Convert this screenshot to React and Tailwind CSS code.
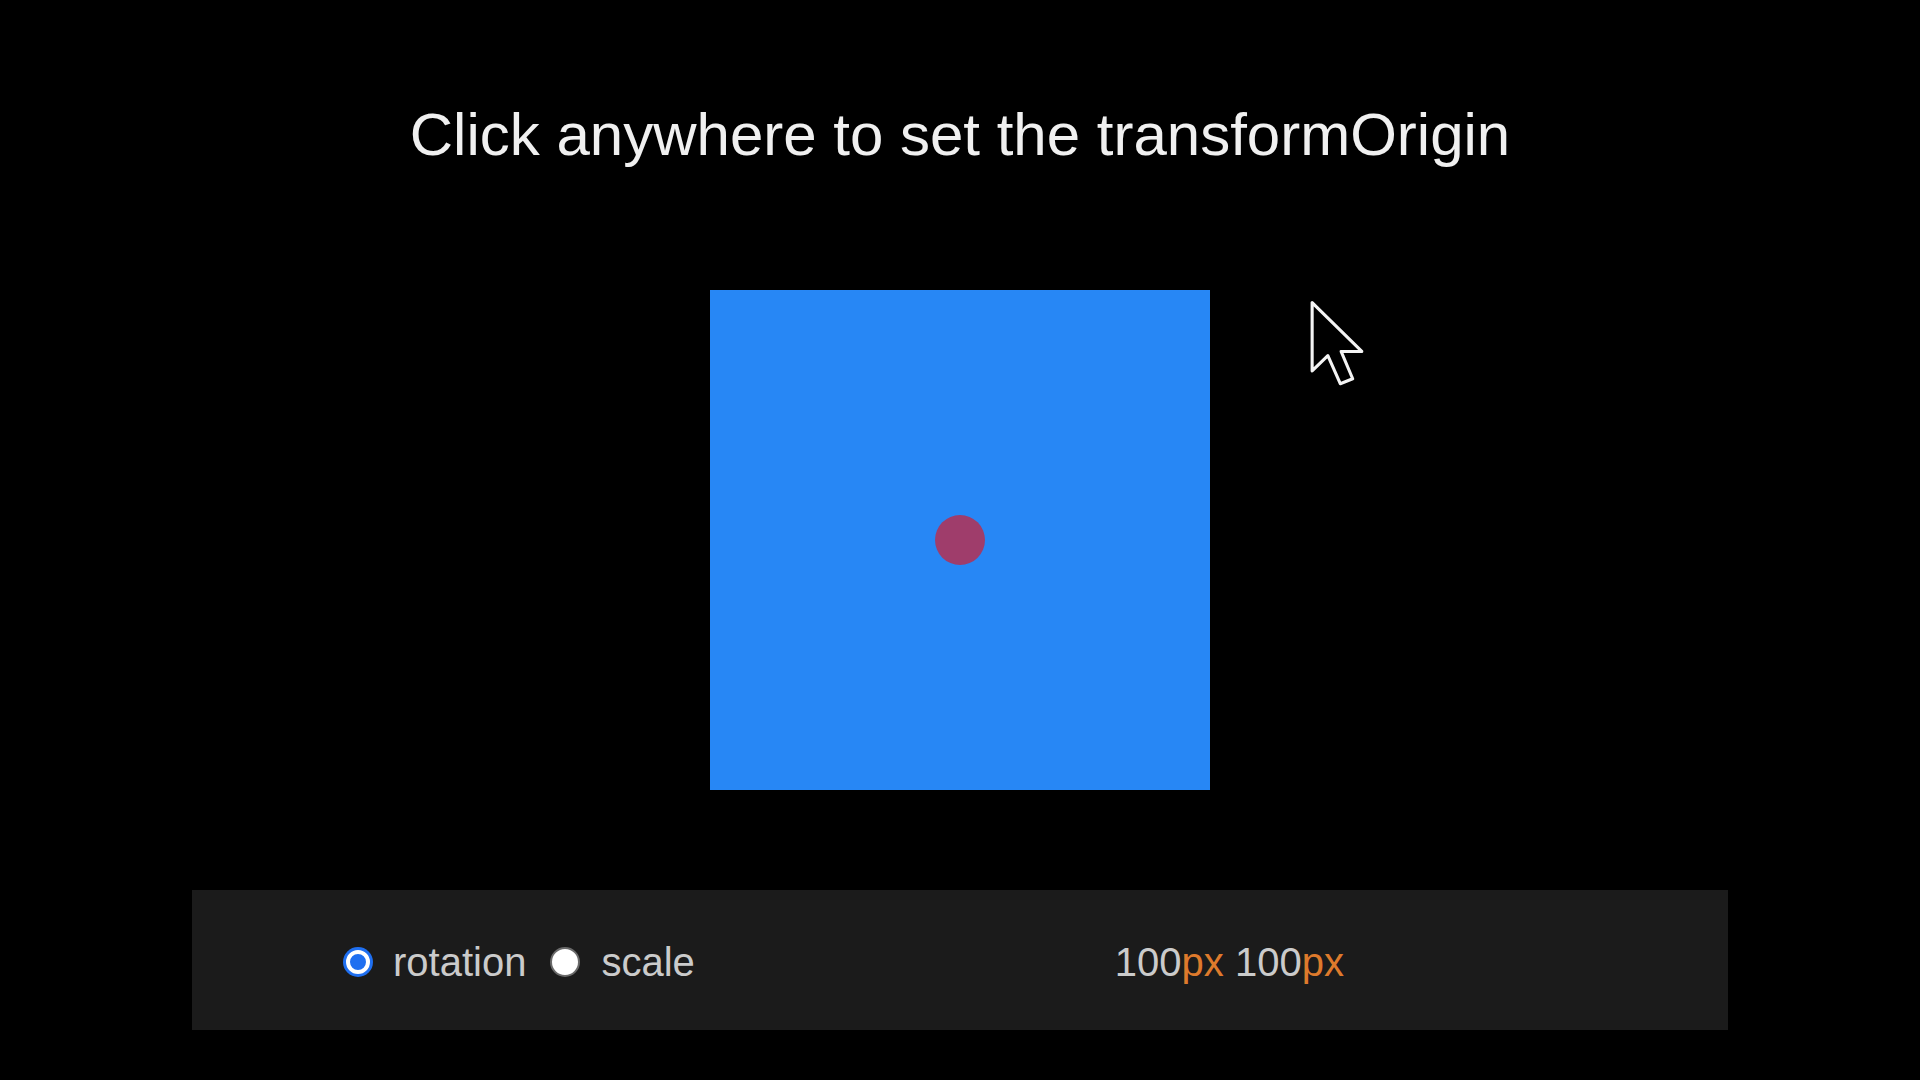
import React from "react";

export default function App() {
  return (
    <div className="relative w-[1920px] h-[1080px] bg-black overflow-hidden flex flex-col items-center" style={{ fontFamily: '"Liberation Sans", Arial, sans-serif' }}>
      <h1 className="mt-[100px] text-[60px] leading-[69px] text-[#f0f0f0] font-normal">Click anywhere to set the transformOrigin</h1>
      <div className="mt-[121px] w-[500px] h-[500px] bg-[#2787f5] flex items-center justify-center">
        <div className="w-[50px] h-[50px] rounded-full bg-[#9f3d6b]" />
      </div>
      <div className="mt-[100px] w-[1536px] h-[140px] bg-[#1b1b1b] flex items-center pl-[151px] text-[40px] text-[#cbcbcb]">
        <div className="flex items-center">
          <span className="mt-[4px] w-[30px] h-[30px] rounded-full bg-[#1f6ff0] flex items-center justify-center">
            <span className="w-[24px] h-[24px] rounded-full border-[4px] border-white bg-[#1f6ff0]" />
          </span>
          <span className="ml-[20px] pt-[4px]">rotation</span>
          <span className="mt-[4px] ml-[24px] w-[30px] h-[30px] rounded-full bg-white border-[2px] border-[#6a6a6a]" />
          <span className="ml-[21px] pt-[4px]">scale</span>
        </div>
        <div className="ml-[420px] pt-[4px]">
          100<span className="text-[#de7a2c]">px</span> 100<span className="text-[#de7a2c]">px</span>
        </div>
      </div>
      <svg className="absolute left-[1308px] top-[298px]" width="60" height="92" viewBox="-1 -1 14.5 22">
        <path d="M0 0 L0 16.5 L3.8 12.8 L6.8 19.6 L9.8 18.4 L7 11.8 L12 11.8 Z" fill="#000" stroke="#f4f4f4" strokeWidth="0.75" strokeLinejoin="round" />
      </svg>
    </div>
  );
}
